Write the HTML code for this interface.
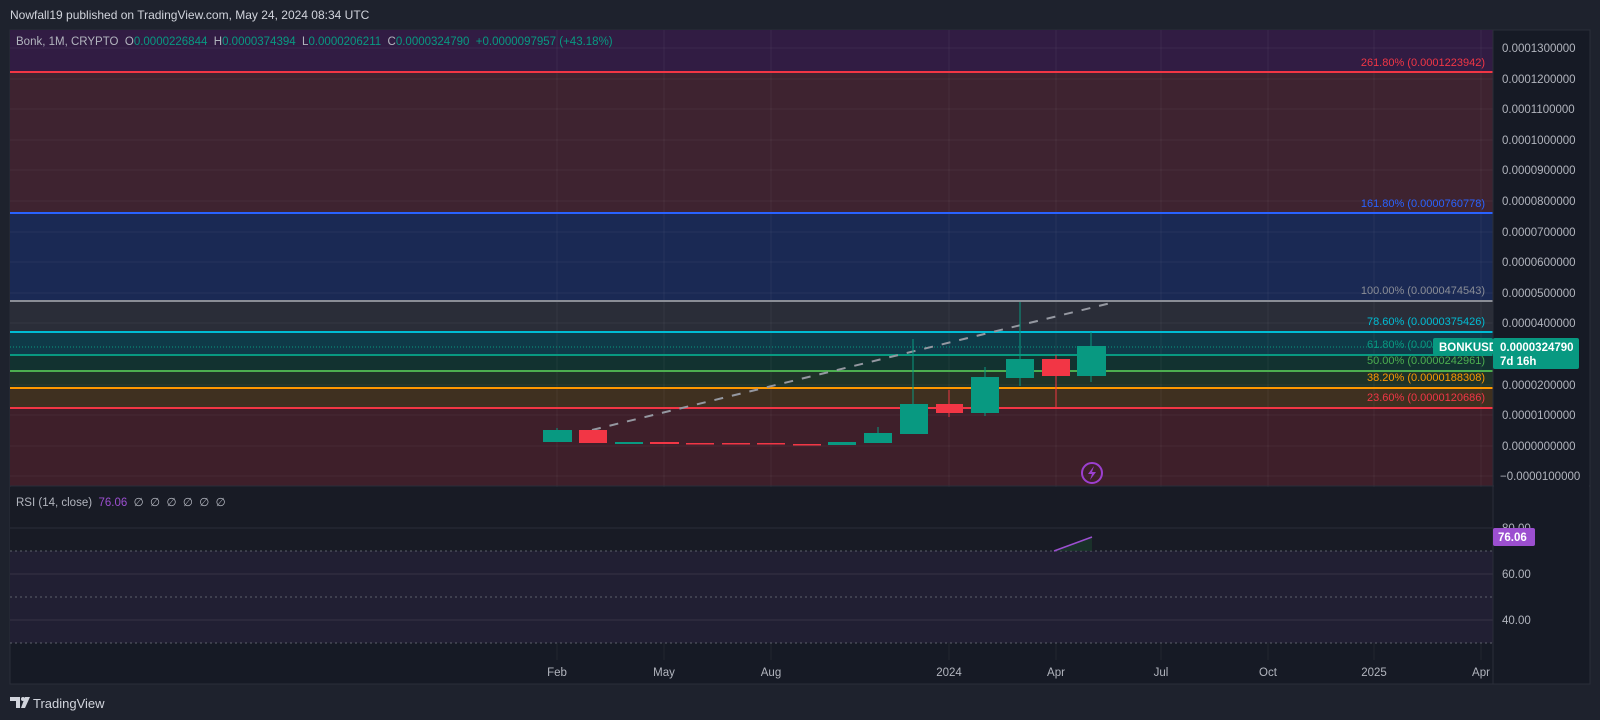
<!DOCTYPE html>
<html><head><meta charset="utf-8"><style>
html,body{margin:0;padding:0;background:#1e222d;}
svg{display:block;font-family:"Liberation Sans",sans-serif;}
text{white-space:pre;}
</style></head><body>
<svg width="1600" height="720" viewBox="0 0 1600 720" xmlns="http://www.w3.org/2000/svg">
<rect width="1600" height="720" fill="#1e222d"/>
<text x="10" y="19" font-size="12" fill="#d1d4dc">Nowfall19 published on TradingView.com, May 24, 2024 08:34 UTC</text>
<rect x="10" y="30" width="1580" height="654" fill="#161a25" stroke="#2a2e39"/>
<rect x="10" y="30" width="1483" height="42" fill="#311c43"/>
<rect x="10" y="72" width="1483" height="141" fill="#3e2330"/>
<rect x="10" y="213" width="1483" height="88" fill="#1a2954"/>
<rect x="10" y="301" width="1483" height="31" fill="#2a2d38"/>
<rect x="10" y="332" width="1483" height="23" fill="#0f3a48"/>
<rect x="10" y="355" width="1483" height="16" fill="#123230"/>
<rect x="10" y="371" width="1483" height="17" fill="#1f3328"/>
<rect x="10" y="388" width="1483" height="20" fill="#3f3020"/>
<rect x="10" y="408" width="1483" height="78" fill="#3e1f2a"/>
<g stroke="#ffffff" stroke-opacity="0.05">
<line x1="557" y1="30" x2="557" y2="660"/><line x1="664" y1="30" x2="664" y2="660"/><line x1="771" y1="30" x2="771" y2="660"/><line x1="949" y1="30" x2="949" y2="660"/><line x1="1056" y1="30" x2="1056" y2="660"/><line x1="1161" y1="30" x2="1161" y2="660"/><line x1="1268" y1="30" x2="1268" y2="660"/><line x1="1374" y1="30" x2="1374" y2="660"/><line x1="1481" y1="30" x2="1481" y2="660"/>
<line x1="10" y1="48" x2="1493" y2="48"/><line x1="10" y1="79" x2="1493" y2="79"/><line x1="10" y1="109" x2="1493" y2="109"/><line x1="10" y1="140" x2="1493" y2="140"/><line x1="10" y1="170" x2="1493" y2="170"/><line x1="10" y1="201" x2="1493" y2="201"/><line x1="10" y1="232" x2="1493" y2="232"/><line x1="10" y1="262" x2="1493" y2="262"/><line x1="10" y1="293" x2="1493" y2="293"/><line x1="10" y1="323" x2="1493" y2="323"/><line x1="10" y1="385" x2="1493" y2="385"/><line x1="10" y1="415" x2="1493" y2="415"/><line x1="10" y1="446" x2="1493" y2="446"/><line x1="10" y1="476" x2="1493" y2="476"/>
</g>
<text x="16" y="45" font-size="11.5" fill="#b2b5be">Bonk, 1M, CRYPTO  O<tspan fill="#089981">0.0000226844</tspan>  H<tspan fill="#089981">0.0000374394</tspan>  L<tspan fill="#089981">0.0000206211</tspan>  C<tspan fill="#089981">0.0000324790</tspan>  <tspan fill="#089981">+0.0000097957 (+43.18%)</tspan></text>
<line x1="10" y1="72" x2="1493" y2="72" stroke="#f23645" stroke-width="2"/>
<line x1="10" y1="213" x2="1493" y2="213" stroke="#2962ff" stroke-width="2"/>
<line x1="10" y1="301" x2="1493" y2="301" stroke="#8a8d96" stroke-width="2"/>
<line x1="10" y1="332" x2="1493" y2="332" stroke="#00bcd4" stroke-width="2"/>
<line x1="10" y1="355" x2="1493" y2="355" stroke="#089981" stroke-width="2"/>
<line x1="10" y1="371" x2="1493" y2="371" stroke="#4caf50" stroke-width="2"/>
<line x1="10" y1="388" x2="1493" y2="388" stroke="#ff9800" stroke-width="2"/>
<line x1="10" y1="408" x2="1493" y2="408" stroke="#f23645" stroke-width="2"/>
<line x1="10" y1="347" x2="1493" y2="347" stroke="#089981" stroke-dasharray="1 2"/>
<g font-size="11" text-anchor="end">
<text x="1485" y="66" fill="#f23645">261.80% (0.0001223942)</text>
<text x="1485" y="207" fill="#2962ff">161.80% (0.0000760778)</text>
<text x="1485" y="294" fill="#8a8d96">100.00% (0.0000474543)</text>
<text x="1485" y="325" fill="#00bcd4">78.60% (0.0000375426)</text>
<text x="1485" y="348" fill="#089981">61.80% (0.0000297000)</text>
<text x="1485" y="364" fill="#4caf50">50.00% (0.0000242961)</text>
<text x="1485" y="381" fill="#ff9800">38.20% (0.0000188308)</text>
<text x="1485" y="401" fill="#f23645">23.60% (0.0000120686)</text>
</g>
<line x1="592" y1="430" x2="1115" y2="302" stroke="#9598a1" stroke-width="2" stroke-dasharray="9 9"/>
<g stroke-width="1">
<line x1="557" y1="428" x2="557" y2="442" stroke="#089981"/><rect x="543" y="430" width="29" height="12" fill="#089981"/>
<rect x="579" y="430" width="28" height="13" fill="#f23645"/>
<rect x="615" y="442" width="28" height="2" fill="#089981"/>
<rect x="650" y="442" width="29" height="2" fill="#f23645"/>
<rect x="686" y="443" width="28" height="1.5" fill="#f23645"/>
<rect x="722" y="443" width="28" height="1.5" fill="#f23645"/>
<rect x="757" y="443" width="28" height="1.5" fill="#f23645"/>
<rect x="793" y="444" width="28" height="1.5" fill="#f23645"/>
<rect x="828" y="442" width="28" height="3" fill="#089981"/>
<line x1="878" y1="427" x2="878" y2="433" stroke="#089981"/><rect x="864" y="433" width="28" height="10" fill="#089981"/>
<line x1="913" y1="339" x2="913" y2="404" stroke="#089981"/><rect x="900" y="404" width="28" height="30" fill="#089981"/>
<line x1="949" y1="390" x2="949" y2="417" stroke="#f23645"/><rect x="936" y="404" width="27" height="9" fill="#f23645"/>
<line x1="985" y1="367" x2="985" y2="416" stroke="#089981"/><rect x="971" y="377" width="28" height="36" fill="#089981"/>
<line x1="1020" y1="302" x2="1020" y2="386" stroke="#089981"/><rect x="1006" y="359" width="28" height="19" fill="#089981"/>
<line x1="1056" y1="355" x2="1056" y2="407" stroke="#f23645"/><rect x="1042" y="359" width="28" height="17" fill="#f23645"/>
<line x1="1091" y1="332" x2="1091" y2="382" stroke="#089981"/><rect x="1077" y="346" width="29" height="30" fill="#089981"/>
</g>
<circle cx="1092" cy="473" r="10" fill="none" stroke="#9c3fd0" stroke-width="2"/>
<path d="M1094 466 L1088 474 L1092 474 L1090 480 L1096 472 L1092 472 Z" fill="#9c3fd0"/>
<line x1="10" y1="486" x2="1590" y2="486" stroke="#2a2e39"/>
<rect x="10" y="487" width="1483" height="64" fill="#181b25"/>
<rect x="10" y="551" width="1483" height="92" fill="#211f33"/>
<line x1="10" y1="528" x2="1493" y2="528" stroke="#2a2e39"/>
<line x1="10" y1="574" x2="1493" y2="574" stroke="#363346"/>
<line x1="10" y1="620" x2="1493" y2="620" stroke="#363346"/>
<g stroke="#5d606b" stroke-dasharray="2 3"><line x1="10" y1="551" x2="1493" y2="551"/><line x1="10" y1="597" x2="1493" y2="597"/><line x1="10" y1="643" x2="1493" y2="643"/></g>
<path d="M1054 551 L1092 537 L1092 551 Z" fill="#1b3a2c" opacity="0.7"/>
<line x1="1054" y1="551" x2="1092" y2="537" stroke="#9c4fd0" stroke-width="1.5"/>
<text x="16" y="506" font-size="11.5" fill="#b2b5be">RSI (14, close)  <tspan fill="#9c4fd0">76.06</tspan>  ∅  ∅  ∅  ∅  ∅  ∅</text>
<rect x="1494" y="31" width="95" height="652" fill="#161a25"/>
<line x1="1493" y1="30" x2="1493" y2="684" stroke="#2a2e39"/>
<g font-size="11.5" fill="#b2b5be">
<text x="1502" y="52">0.0001300000</text><text x="1502" y="83">0.0001200000</text><text x="1502" y="113">0.0001100000</text><text x="1502" y="144">0.0001000000</text><text x="1502" y="174">0.0000900000</text><text x="1502" y="205">0.0000800000</text><text x="1502" y="236">0.0000700000</text><text x="1502" y="266">0.0000600000</text><text x="1502" y="297">0.0000500000</text><text x="1502" y="327">0.0000400000</text><text x="1502" y="389">0.0000200000</text><text x="1502" y="419">0.0000100000</text><text x="1502" y="450">0.0000000000</text><text x="1500" y="480">−0.0000100000</text>
<text x="1502" y="532">80.00</text><text x="1502" y="578">60.00</text><text x="1502" y="624">40.00</text>
</g>
<rect x="1433" y="338" width="60" height="17" rx="2" fill="#089981"/>
<text x="1439" y="351" font-size="11.5" font-weight="bold" fill="#ffffff">BONKUSD</text>
<rect x="1493" y="338" width="86" height="31" rx="2" fill="#089981"/>
<text x="1500" y="351" font-size="11.5" font-weight="bold" fill="#ffffff">0.0000324790</text>
<text x="1500" y="365" font-size="11.5" font-weight="bold" fill="#ffffff">7d 16h</text>
<rect x="1493" y="528" width="42" height="18" rx="2" fill="#9c4fd0"/>
<text x="1498" y="541" font-size="11.5" font-weight="bold" fill="#ffffff">76.06</text>
<g font-size="11.5" fill="#b2b5be" text-anchor="middle">
<text x="557" y="676">Feb</text><text x="664" y="676">May</text><text x="771" y="676">Aug</text><text x="949" y="676">2024</text><text x="1056" y="676">Apr</text><text x="1161" y="676">Jul</text><text x="1268" y="676">Oct</text><text x="1374" y="676">2025</text><text x="1481" y="676">Apr</text>
</g>
<g fill="#d1d4dc">
<path d="M10 697 h10 v11 h-4 v-7 h-6 z"/>
<circle cx="23" cy="699" r="2"/>
<path d="M25 697 h5 l-5 11 h-4 z"/>
</g>
<text x="33" y="708" font-size="13" fill="#d1d4dc">TradingView</text>
</svg>
</body></html>
